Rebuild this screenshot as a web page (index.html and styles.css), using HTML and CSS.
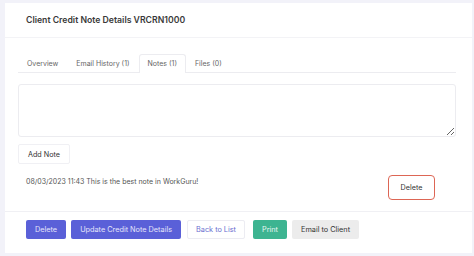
FILE: index.html
```html
<!DOCTYPE html>
<html lang="en">
<head>
  <meta charset="UTF-8">
  <title>Client Credit Note Details</title>
  <link rel="stylesheet" href="styles.css">
</head>
<body>

<div class="kortti">
  <div class="otsikko">Client Credit Note Details VRCRN1000</div>

  <div class="sisalto">
    <div class="valilehdet">
      <span class="valilehti">Overview</span>
      <span class="valilehti">Email History (1)</span>
      <span class="valilehti aktiivinen">Notes (1)</span>
      <span class="valilehti">Files (0)</span>
    </div>

    <textarea class="muistio"></textarea>
    <button type="button" class="lisaa-nappi">Add Note</button>

    <div class="muistiinpano">
      <span class="muistiinpano-teksti">08/03/2023 11:43 This is the best note in WorkGuru!</span>
      <button type="button" class="poista-nappi">Delete</button>
    </div>
  </div>

  <div class="alapalkki">
    <button type="button" class="nappi sininen">Delete</button>
    <button type="button" class="nappi sininen">Update Credit Note Details</button>
    <button type="button" class="nappi valkoinen">Back to List</button>
    <button type="button" class="nappi vihrea">Print</button>
    <button type="button" class="nappi harmaa">Email to Client</button>
  </div>
</div>

</body>
</html>
```

FILE: styles.css
```css
body {
  margin: 0;
  padding: 3px 2px 3px 5px;
  background-color: #f2f2f9;
  font-family: Inter, "Noto Sans", sans-serif;
  color: #333;
}
.kortti {
  background-color: #fff;
  height: 250px;
  display: flex;
  flex-direction: column;
}
.otsikko {
  height: 34px;
  line-height: 34px;
  padding-left: 21px;
  font-size: 8.7px;
  font-weight: 600;
  color: #3a3a3a;
  border-bottom: 1px solid #f3f3f6;
}
.sisalto {
  padding: 16px 16px 0 13px;
  flex: 1;
}
.valilehdet {
  display: flex;
  border-bottom: 1px solid #ececf0;
  height: 18px;
}
.valilehti {
  font-size: 7px;
  color: #666;
  padding: 0 8px;
  line-height: 18px;
  border: 1px solid transparent;
  border-bottom: none;
  border-radius: 3px 3px 0 0;
}
.valilehti.aktiivinen {
  border-color: #ececf0;
  background-color: #fff;
  margin-bottom: -1px;
}
.muistio {
  display: block;
  box-sizing: border-box;
  width: 100%;
  height: 53px;
  margin-top: 11px;
  border: 1px solid #ececf0;
  border-radius: 3px;
  resize: vertical;
}
.lisaa-nappi {
  display: block;
  margin-top: 7px;
  width: 52px;
  height: 20px;
  padding: 0;
  font-family: inherit;
  font-size: 7.2px;
  color: #333;
  background-color: #fff;
  border: 1px solid #f0f0f4;
  border-radius: 2px;
}
.muistiinpano {
  display: flex;
  align-items: flex-start;
  justify-content: space-between;
  margin-top: 11px;
  padding-left: 8px;
  padding-right: 21px;
}
.muistiinpano-teksti {
  font-size: 7px;
  color: #555;
  margin-top: 2px;
}
.poista-nappi {
  width: 47px;
  height: 25px;
  font-family: inherit;
  font-size: 7.2px;
  color: #333;
  background-color: #fff;
  border: 1.5px solid #dd6655;
  border-radius: 4px;
}
.alapalkki {
  border-top: 1px solid #f0f0f4;
  padding: 8px 21px 14px;
  display: flex;
  gap: 5px;
}
.nappi {
  height: 19px;
  padding: 0 8px;
  font-family: inherit;
  font-size: 7.3px;
  border: 1px solid transparent;
  border-radius: 2px;
}
.sininen {
  background-color: #5a60d8;
  color: #e4e5fa;
}
.valkoinen {
  background-color: #fff;
  border-color: #ececf2;
  color: #6b6fd0;
  margin-left: 1px;
}
.vihrea {
  background-color: #3db491;
  color: #e6f7f1;
  margin-left: 3px;
}
.harmaa {
  background-color: #ececec;
  color: #333;
}
```
